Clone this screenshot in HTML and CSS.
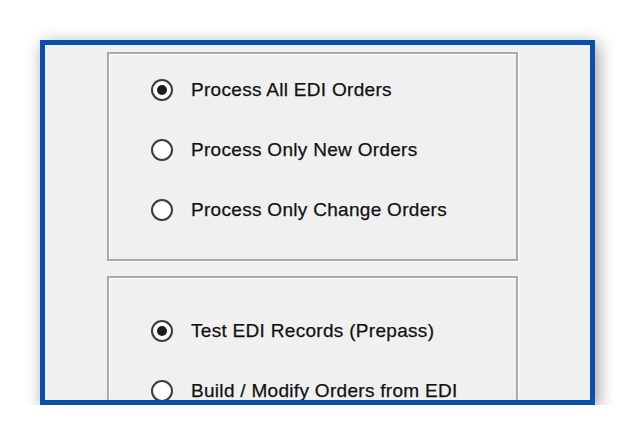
FILE: index.html
```html
<!DOCTYPE html>
<html lang="en">
<head>
    <meta charset="UTF-8">
    <title>EDI Order Processing</title>
    <link rel="stylesheet" href="styles.css">
</head>
<body>
    <div class="frame">
        <div class="group group-mode">
            <label class="option"><span class="radio checked"></span>Process All EDI Orders</label>
            <label class="option"><span class="radio"></span>Process Only New Orders</label>
            <label class="option"><span class="radio"></span>Process Only Change Orders</label>
        </div>
        <div class="group group-run">
            <label class="option"><span class="radio checked"></span>Test EDI Records (Prepass)</label>
            <label class="option"><span class="radio"></span>Build / Modify Orders from EDI</label>
        </div>
    </div>
</body>
</html>
```

FILE: styles.css
```css
* {
    box-sizing: border-box;
}
body {
    margin: 0;
    background-color: #fff;
    font-family: 'Liberation Sans', Arial, sans-serif;
    color: #111;
}
.frame {
    margin: 40px 0 0 40px;
    width: 555px;
    height: 365px;
    border: 5px solid #0a4fab;
    background-color: #f0f0f0;
    box-shadow: 3px 4px 16px rgba(0, 0, 0, 0.4);
    overflow: hidden;
    padding: 7px 0 0 62px;
}
.group {
    width: 411px;
    border: 2px solid #a9a9a9;
    box-shadow: inset 1px 1px 0 #fff, 1px 1px 0 #fff;
    padding-left: 42px;
}
.group-mode {
    padding-top: 6px;
    padding-bottom: 19px;
}
.group-run {
    margin-top: 15px;
    padding-top: 23px;
    height: 200px;
}
.option {
    display: flex;
    align-items: center;
    height: 60px;
    font-size: 19px;
    letter-spacing: 0.3px;
    -webkit-text-stroke: 0.25px #111;
}
.radio {
    width: 22px;
    height: 22px;
    border: 2px solid #3c3c3c;
    border-radius: 50%;
    background-color: #fff;
    margin-right: 18px;
    display: flex;
    align-items: center;
    justify-content: center;
}
.radio.checked::after {
    content: "";
    width: 10px;
    height: 10px;
    border-radius: 50%;
    background-color: #1c1c1c;
}
```
